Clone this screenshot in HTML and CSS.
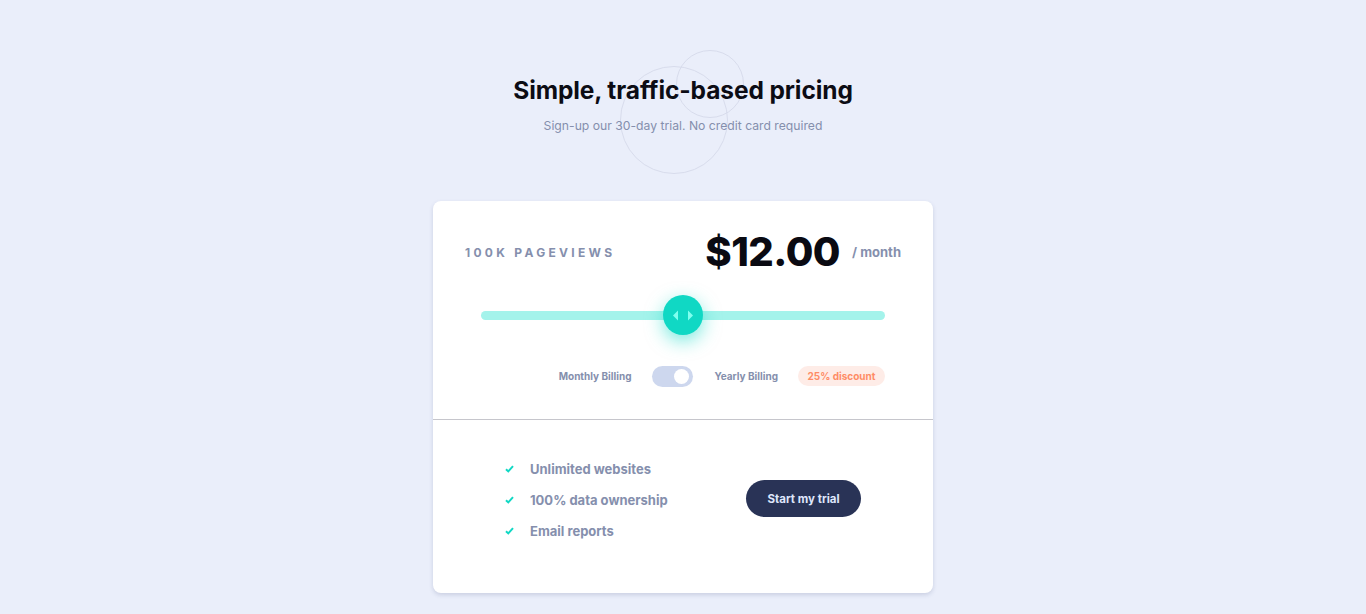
FILE: index.html
```html
<!DOCTYPE html>
<html lang="en">
<head>
<meta charset="utf-8">
<title>Pricing</title>
<link rel="stylesheet" href="styles.css">
</head>
<body>
<main class="page">
  <header class="hero">
    <span class="circle circle-big"></span>
    <span class="circle circle-small"></span>
    <h1 class="title">Simple, traffic-based pricing</h1>
    <p class="subtitle">Sign-up our 30-day trial. No credit card required</p>
  </header>

  <section class="card">
    <div class="card-top">
      <div class="price-row">
        <span class="views">100K Pageviews</span>
        <div class="price">
          <span class="amount">$12.00</span>
          <span class="period">/ month</span>
        </div>
      </div>

      <div class="slider">
        <div class="track"></div>
        <div class="thumb">
          <svg width="22" height="11" viewBox="0 0 22 11" aria-hidden="true">
            <path d="M6 0.5 L1 5.5 L6 10.5 Z" fill="#80ffef"/>
            <path d="M16 0.5 L21 5.5 L16 10.5 Z" fill="#80ffef"/>
          </svg>
        </div>
      </div>

      <div class="billing">
        <span class="billing-label">Monthly Billing</span>
        <span class="toggle"><span class="knob"></span></span>
        <span class="billing-label">Yearly Billing</span>
        <span class="badge">25% discount</span>
      </div>
    </div>

    <div class="card-bottom">
      <ul class="features">
        <li class="feature"><svg class="check" width="9" height="8" viewBox="0 0 9 8"><path d="M1 4.2 L3.3 6.4 L8 1.2" fill="none" stroke="#10d8c4" stroke-width="2"/></svg>Unlimited websites</li>
        <li class="feature"><svg class="check" width="9" height="8" viewBox="0 0 9 8"><path d="M1 4.2 L3.3 6.4 L8 1.2" fill="none" stroke="#10d8c4" stroke-width="2"/></svg>100% data ownership</li>
        <li class="feature"><svg class="check" width="9" height="8" viewBox="0 0 9 8"><path d="M1 4.2 L3.3 6.4 L8 1.2" fill="none" stroke="#10d8c4" stroke-width="2"/></svg>Email reports</li>
      </ul>
      <button class="cta">Start my trial</button>
    </div>
  </section>
</main>
</body>
</html>
```

FILE: styles.css
```css
* { box-sizing: border-box; }

html, body {
  margin: 0;
  padding: 0;
}

body {
  background: #eaeefa;
  font-family: Inter, "Noto Sans", "Liberation Sans", sans-serif;
  min-height: 614px;
}

.page {
  display: flex;
  flex-direction: column;
  align-items: center;
  padding-top: 74px;
}

.hero {
  position: relative;
  display: flex;
  flex-direction: column;
  align-items: center;
}

.circle {
  position: absolute;
  border: 1px solid #d8dcec;
  border-radius: 50%;
  pointer-events: none;
}

.circle-big {
  width: 108px;
  height: 108px;
  left: 107px;
  top: -8px;
}

.circle-small {
  width: 68px;
  height: 68px;
  left: 163px;
  top: -24px;
}

.title {
  position: relative;
  margin: 0;
  font-size: 24.5px;
  line-height: 32px;
  font-weight: 700;
  color: #0c0c14;
  letter-spacing: -0.1px;
}

.subtitle {
  position: relative;
  margin: 10px 0 0;
  font-size: 12.2px;
  line-height: 20px;
  color: #858fad;
}

.card {
  margin-top: 65px;
  width: 500px;
  background: #fff;
  border-radius: 8px;
  box-shadow: 0 2px 4px rgba(60, 70, 120, 0.18);
}

.card-top {
  padding: 26px 32px 33px;
}

.price-row {
  display: flex;
  justify-content: space-between;
  align-items: center;
  height: 50px;
}

.views {
  text-transform: uppercase;
  font-size: 12px;
  font-weight: 700;
  letter-spacing: 3.3px;
  color: #858fad;
}

.price {
  display: flex;
  align-items: center;
  gap: 12px;
}

.amount {
  font-size: 40px;
  font-weight: 800;
  letter-spacing: -0.5px;
  color: #0a0a12;
  line-height: 50px;
}

.period {
  font-size: 13px;
  font-weight: 700;
  color: #858fad;
}

.slider {
  position: relative;
  margin: 18px 16px 0;
  height: 40px;
  display: flex;
  align-items: center;
  justify-content: center;
}

.track {
  width: 100%;
  height: 9px;
  border-radius: 5px;
  background: #a4f3eb;
}

.thumb {
  position: absolute;
  left: 50%;
  top: 0;
  margin-left: -20px;
  width: 40px;
  height: 40px;
  border-radius: 50%;
  background: #10d8c4;
  box-shadow: 0 6px 18px rgba(16, 216, 196, 0.55);
  display: flex;
  align-items: center;
  justify-content: center;
}

.billing {
  margin-top: 31px;
  padding-right: 16px;
  display: flex;
  justify-content: flex-end;
  align-items: center;
  height: 20px;
}

.billing-label {
  font-size: 10px;
  font-weight: 700;
  color: #858fad;
}

.toggle {
  margin: 0 21px 0 21px;
  width: 41px;
  height: 21px;
  border-radius: 11px;
  background: #cdd7ee;
  display: flex;
  align-items: center;
  justify-content: flex-end;
  padding-right: 4px;
}

.knob {
  width: 15px;
  height: 15px;
  border-radius: 50%;
  background: #fff;
}

.badge {
  margin-left: 20px;
  width: 87px;
  height: 20px;
  border-radius: 10px;
  background: #feece7;
  color: #ff8c66;
  font-size: 10px;
  font-weight: 700;
  display: flex;
  align-items: center;
  justify-content: center;
}

.card-bottom {
  border-top: 1px solid #c6c6cc;
  padding: 33px 72px 47px;
  display: flex;
  justify-content: space-between;
  align-items: center;
}

.features {
  list-style: none;
  margin: 0;
  padding: 0;
}

.feature {
  display: flex;
  align-items: center;
  height: 31px;
  font-size: 13px;
  font-weight: 700;
  color: #858fad;
}

.check {
  margin-right: 16px;
}

.cta {
  width: 115px;
  height: 37px;
  border: none;
  border-radius: 19px;
  background: #293356;
  color: #dfe6fb;
  font-family: inherit;
  font-size: 11.5px;
  font-weight: 700;
  margin-top: -2px;
}
```
